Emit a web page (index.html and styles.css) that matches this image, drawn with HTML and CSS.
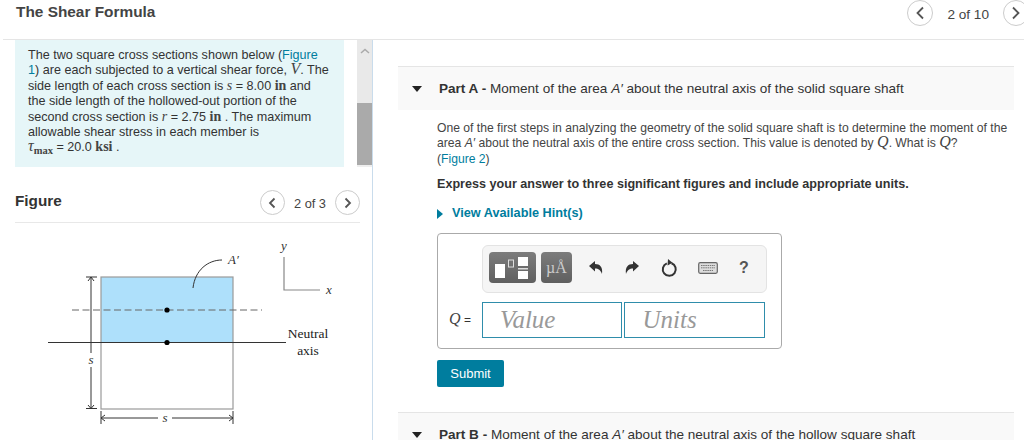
FILE: index.html
```html
<!DOCTYPE html>
<html>
<head>
  <title>The Shear Formula</title>
  <link rel="stylesheet" href="styles.css">
</head>
<body>

<div class="topbar">
  <h1>The Shear Formula</h1>
  <div class="pager pager-top">
    <span class="circle-btn"><svg width="10" height="14" viewBox="0 0 10 14"><path d="M8 1.5 2.5 7 8 12.5" /></svg></span>
    <span class="pager-text">2 of 10</span>
    <span class="circle-btn"><svg width="10" height="14" viewBox="0 0 10 14"><path d="M2 1.5 7.500 7 2 12.5" /></svg></span>
  </div>
</div>

<div class="main">
  <div class="left">
    <div class="intro-row">
      <div class="intro">
        The two square cross sections shown below (<a>Figure<br>1</a>) are each subjected to a vertical shear force, <span class="math big"><i>V</i></span>. The<br>
        side length of each cross section is <span class="math"><i>s</i></span> = 8.00 <span class="math">in</span> and<br>
        the side length of the hollowed-out portion of the<br>
        second cross section is <span class="math"><i>r</i></span> = 2.75 <span class="math">in</span> . The maximum<br>
        allowable shear stress in each member is<br>
        <span class="math"><i class="tau">τ</i><b class="sub">max</b></span> = 20.0 <span class="math">ksi</span> .
      </div>
      <div class="scrollbar">
        <div class="scroll-up"><svg width="10" height="6" viewBox="0 0 10 6"><path d="M1 5 5 1.5 9 5" /></svg></div>
        <div class="scroll-thumb"></div>
      </div>
    </div>

    <div class="figure-head">
      <h2>Figure</h2>
      <div class="pager">
        <span class="circle-btn small"><svg width="8" height="12" viewBox="0 0 8 12"><path d="M6.5 1.5 2 6 6.5 10.5" /></svg></span>
        <span class="pager-text small-text">2 of 3</span>
        <span class="circle-btn small"><svg width="8" height="12" viewBox="0 0 8 12"><path d="M1.5 1.5 6 6 1.5 10.5" /></svg></span>
      </div>
    </div>

    <svg class="diagram" width="372" height="217" viewBox="0 223 372 217">
      <rect x="101" y="277" width="132" height="65.5" fill="#aee0fb" />
      <rect x="101" y="277" width="132" height="132" fill="none" stroke="#9a9a9a" stroke-width="1.2" />
      <line x1="72" y1="310" x2="262" y2="310" stroke="#666" stroke-dasharray="7 3.5" />
      <line x1="48" y1="342.5" x2="286" y2="342.5" stroke="#333" />
      <circle cx="167" cy="310" r="2.6" fill="#000" />
      <circle cx="167" cy="342.5" r="2.6" fill="#000" />
      <path d="M193 288C195 270 208 260 222 260" fill="none" stroke="#333" />
      <text x="228" y="264" class="fig-label">A′</text>
      <path d="M284 257V290H320" fill="none" stroke="#888" stroke-width="1.2" />
      <text x="281" y="250" class="fig-label">y</text>
      <text x="326" y="294" class="fig-label">x</text>
      <text x="308" y="338" class="fig-text">Neutral</text>
      <text x="308" y="355" class="fig-text">axis</text>
      <path d="M86 277H97M86 408.5H97M91 277V353M91 367V408.5M88 281 91 277 94 281M88 405 91 408.5 94 405" fill="none" stroke="#333" />
      <text x="88.500" y="364" class="fig-label">s</text>
      <path d="M101 411V424M233 411V424M101 418H158M172 418H233M105 415 101 418 105 421M229 415 233 418 229 421" fill="none" stroke="#333" />
      <text x="162.500" y="422" class="fig-label">s</text>
    </svg>
  </div>

  <div class="right">
    <div class="part-head">
      <span class="tri-down"></span>
      <div class="part-title"><b>Part A -</b> Moment of the area <i>A′</i> about the neutral axis of the solid square shaft</div>
    </div>

    <div class="part-body">
      <p class="question">One of the first steps in analyzing the geometry of the solid square shaft is to determine the moment of the area <i>A′</i> about the neutral axis of the entire cross section. This value is denoted by <span class="math big"><i>Q</i></span>. What is <span class="math big"><i>Q</i></span>?<br>(<a>Figure 2</a>)</p>
      <p class="express">Express your answer to three significant figures and include appropriate units.</p>
      <div class="hint"><span class="tri-right"></span>View Available Hint(s)</div>

      <div class="answer-box">
        <div class="toolbar">
          <span class="tool-btn templates">
            <svg width="35" height="22" viewBox="0 0 35 22">
              <rect x="0" y="7" width="10" height="14" fill="#fff" />
              <rect x="13.500" y="3" width="5" height="7" fill="none" stroke="#ddd" />
              <rect x="23" y="0" width="10" height="9" fill="#fff" />
              <rect x="23" y="11" width="10" height="1.500" fill="#ddd" />
              <rect x="23" y="14" width="10" height="8" fill="#fff" />
            </svg>
          </span>
          <span class="tool-btn units">µÅ</span>
          <span class="tool-icons">
            <svg class="icon" width="16" height="16" viewBox="0 0 16 16"><path d="M1 6 7 1V4C12 4 15 7 14 14 12.500 10 10.500 8.500 7 8.500V11.500Z" fill="#333" /></svg>
            <svg class="icon" width="16" height="16" viewBox="0 0 16 16"><path d="M15 6 9 1V4C4 4 1 7 2 14 3.500 10 5.500 8.500 9 8.500V11.500Z" fill="#333" /></svg>
            <svg class="icon" width="18" height="18" viewBox="0 0 18 18"><path d="M6.800 4.300A6.500 6.500 0 1 0 11.500 4.200" fill="none" stroke="#333" stroke-width="2" /><path d="M8 0 12.500 3.800 7.500 6.500Z" fill="#333" /></svg>
            <svg class="icon" width="20" height="12" viewBox="0 0 20 12"><rect x="0.700" y="0.700" width="18.600" height="10.600" rx="1.500" fill="#ddd" stroke="#666" stroke-width="1.200" /><path d="M3 3.500H17M3 5.800H17M5 8.500H15" stroke="#777" stroke-dasharray="1.500 .7" /></svg>
            <span class="help">?</span>
          </span>
        </div>
        <div class="input-row">
          <label class="q-label"><span class="math big"><i>Q</i></span> =</label>
          <div class="fake-input">Value</div>
          <div class="fake-input">Units</div>
        </div>
      </div>

      <button class="submit">Submit</button>
    </div>

    <div class="part-head part-b">
      <span class="tri-down"></span>
      <div class="part-title"><b>Part B -</b> Moment of the area <i>A′</i> about the neutral axis of the hollow square shaft</div>
    </div>
  </div>
</div>

</body>
</html>
```

FILE: styles.css
```css
html, body {
  margin: 0;
  height: 440px;
  overflow: hidden;
}

body {
  font-family: "Liberation Sans", Arial, sans-serif;
  font-size: 12px;
  color: #333;
  background: white;
}

a {
  color: #007d9e;
}

.math {
  font-family: "Liberation Serif", serif;
  font-size: 14px;
  font-weight: bold;
  line-height: 0;
  color: #444;
}

.math i {
  font-weight: normal;
}

.math.big {
  font-size: 16px;
}

.math .tau {
  font-size: 16px;
}

.sub {
  font-size: 10.500px;
  position: relative;
  top: 3px;
}

.topbar {
  height: 39px;
  border-bottom: 1px solid #e5e5e5;
  margin-left: 3px;
  display: flex;
  justify-content: space-between;
  padding-left: 13px;
}

h1 {
  margin: 3px 0 0;
  font-size: 15.400px;
  line-height: 18px;
  color: #444;
}

.pager {
  display: flex;
  align-items: center;
}

.pager-top {
  height: 26px;
  flex-shrink: 0;
  margin-right: -5px;
}

.pager-text {
  margin: 2px 14px 0;
  font-size: 13.600px;
  color: #444;
  white-space: nowrap;
}

.figure-head .small-text {
  margin: 1px 9px 0;
  font-size: 12.800px;
}

.circle-btn {
  width: 26px;
  height: 26px;
  flex-shrink: 0;
  border: 1px solid #ccc;
  border-radius: 50%;
  box-sizing: border-box;
  display: flex;
  align-items: center;
  justify-content: center;
}

.circle-btn.small {
  width: 25px;
  height: 25px;
}

.circle-btn path {
  fill: none;
  stroke: #555;
  stroke-width: 1.800;
}

.main {
  display: flex;
  height: 400px;
}

.left {
  width: 372px;
  flex-shrink: 0;
  border-right: 1px solid #c9dcec;
}

.intro-row {
  display: flex;
  height: 127px;
}

.intro {
  width: 329px;
  margin-left: 15px;
  padding: 8px 0 0 13px;
  box-sizing: border-box;
  background: #e6f6f8;
  font-size: 12.600px;
  line-height: 15.400px;
  white-space: nowrap;
}

.scrollbar {
  width: 15px;
  margin-left: 13px;
  display: flex;
  flex-direction: column;
  background: #e9e9e9;
  border-bottom: 2px solid #eee;
}

.scroll-up {
  height: 63px;
  padding-top: 3px;
  box-sizing: border-box;
  text-align: center;
}

.scroll-up path {
  fill: none;
  stroke: #aaa;
  stroke-width: 1.500;
}

.scroll-thumb {
  flex: 1;
  background: #aaa;
}

.figure-head {
  margin: 23px 12px 0 15px;
  height: 32px;
  border-bottom: 1px solid #e8e8e8;
  display: flex;
  justify-content: space-between;
}

h2 {
  margin: 1px 0 0;
  font-size: 15.300px;
  line-height: 20px;
  color: #333;
}

.figure-head .pager {
  height: 25px;
}

.diagram {
  display: block;
}

.fig-label {
  font-family: "Liberation Serif", serif;
  font-style: italic;
  font-size: 13px;
  fill: #333;
}

.fig-text {
  font-family: "Liberation Serif", serif;
  font-size: 13.500px;
  text-anchor: middle;
  fill: #222;
}

.right {
  flex: 1;
  padding: 26px 10px 0 25px;
  min-width: 0;
}

.part-head {
  height: 44px;
  border-top: 1px solid #e5e5e5;
  background: #f9f9f9;
  box-sizing: border-box;
  display: flex;
  align-items: center;
  padding-left: 14px;
}

.tri-down {
  width: 0;
  height: 0;
  border-left: 5px solid transparent;
  border-right: 5px solid transparent;
  border-top: 6px solid #222;
  margin-top: 1px;
}

.part-title {
  margin-left: 17px;
  font-size: 13.550px;
  white-space: nowrap;
  color: #333;
}

.part-body {
  padding: 11px 0 0 39px;
}

.question {
  margin: 0;
  font-size: 12.150px;
  line-height: 15.400px;
  color: #444;
}

.express {
  margin: 10px 0 0;
  font-size: 12.600px;
  font-weight: bold;
  line-height: 15px;
}

.hint {
  margin-top: 14px;
  display: flex;
  align-items: center;
  font-size: 12.700px;
  font-weight: bold;
  color: #007d9e;
  line-height: 15px;
}

.tri-right {
  width: 0;
  height: 0;
  border-top: 5px solid transparent;
  border-bottom: 5px solid transparent;
  border-left: 6px solid #007d9e;
  margin-right: 9px;
}

.answer-box {
  width: 345px;
  height: 116px;
  margin-top: 12px;
  box-sizing: border-box;
  border: 1px solid #aaa;
  border-radius: 4px;
  padding: 11px 14px 0 44px;
}

.toolbar {
  width: 285px;
  height: 48px;
  box-sizing: border-box;
  background: #f5f5f5;
  border: 1px solid #e3e3e3;
  border-radius: 6px;
  display: flex;
  align-items: center;
  padding: 0 0 3px 6px;
}

.tool-btn {
  height: 31px;
  border-radius: 4px;
  background: linear-gradient(#7c7c7c, #5f5f5f);
  display: flex;
  align-items: center;
  justify-content: center;
  box-sizing: border-box;
}

.templates {
  width: 47px;
}

.units {
  width: 31px;
  margin-left: 5px;
  font-family: "Liberation Serif", serif;
  font-size: 16px;
  color: #ccc;
}

.tool-icons {
  margin-left: 16px;
  width: 162px;
  display: flex;
  align-items: center;
  justify-content: space-between;
}

.help {
  font-size: 16px;
  font-weight: bold;
  color: #555;
  width: 12px;
  text-align: center;
}

.input-row {
  display: flex;
  align-items: center;
  margin-top: 9px;
  margin-left: -33px;
}

.q-label {
  width: 33px;
  font-size: 12px;
  white-space: nowrap;
}

.fake-input {
  width: 141px;
  height: 36px;
  box-sizing: border-box;
  border: 1.500px solid #2f8dab;
  margin-right: 2px;
  padding-left: 17px;
  font-family: "Liberation Serif", serif;
  font-style: italic;
  font-size: 25px;
  line-height: 33px;
  color: #999;
}

.submit {
  display: block;
  width: 67px;
  height: 27px;
  margin-top: 11px;
  padding: 0;
  border: 0;
  border-radius: 2px;
  background: #007d9e;
  color: white;
  font-family: "Liberation Sans", Arial, sans-serif;
  font-size: 13px;
}

.part-b {
  margin-top: 25px;
}
```
